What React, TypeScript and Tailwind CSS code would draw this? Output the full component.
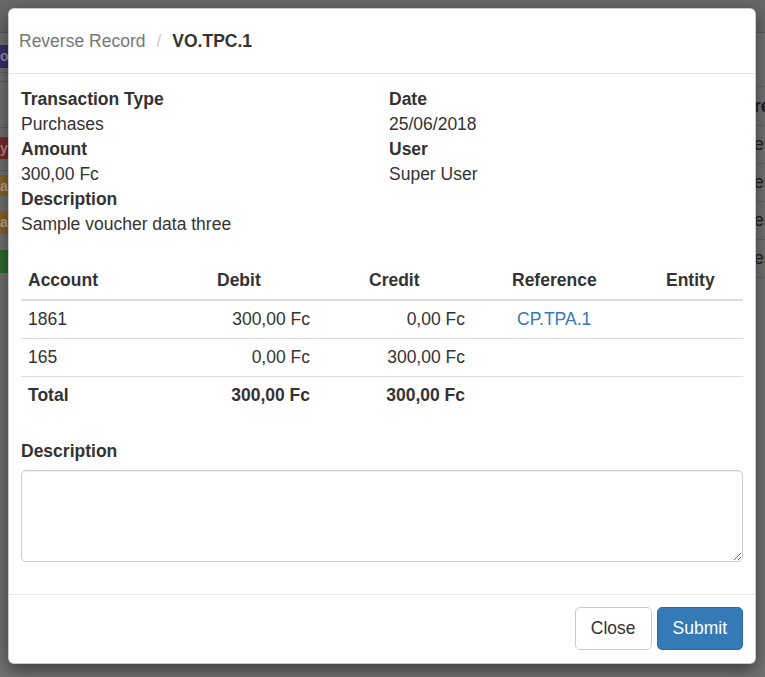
import React from "react";

const font = "font-['Liberation_Sans','Helvetica_Neue',Arial,sans-serif]";

function BgLeft() {
  return (
    <div className="w-[24px] flex flex-col text-[14px] leading-[22px] text-[rgba(255,255,255,0.45)] font-bold">
      <div className="h-[12px]" />
      <div className="h-[23px] bg-[#3b2f6a] overflow-hidden">o</div>
      <div className="h-[5px] border-b border-[#5f5f5f]" />
      <div className="h-[9px] border-b border-[#5f5f5f]" />
      <div className="h-[46px] border-b border-[#5f5f5f]" />
      <div className="h-[9px]" />
      <div className="h-[22px] bg-[#7a2a2a] overflow-hidden">y</div>
      <div className="h-[12px] border-b border-[#5f5f5f]" />
      <div className="h-[4px]" />
      <div className="h-[21px] bg-[#8a6428] overflow-hidden">a</div>
      <div className="h-[15px]" />
      <div className="h-[23px] bg-[#8a6428] overflow-hidden">a</div>
      <div className="h-[16px]" />
      <div className="h-[23px] bg-[#2f6a31] overflow-hidden pl-[9px]">l</div>
    </div>
  );
}

function BgRight() {
  const rows = ["es", "es", "es", "es"];
  return (
    <div className="w-[40px] flex flex-col text-[17.5px] text-[#1f1f1f] overflow-hidden">
      <div className="h-[54px] border-b border-[#626262]" />
      <div className="h-[39px] border-b border-[#626262] flex items-center pl-[29px] font-bold">re</div>
      {rows.map((r, i) => (
        <div key={i} className="h-[38px] border-b border-[#626262] flex items-center pl-[29px]">
          {r}
        </div>
      ))}
    </div>
  );
}

export default function App() {
  return (
    <div className={`relative w-[765px] h-[677px] overflow-hidden bg-[#737373] ${font}`}>
      {/* Background page (dimmed) */}
      <div className="h-[33px] bg-[#696969] border-b border-[#5c5c5c]" />
      <div className="flex justify-between">
        <BgLeft />
        <BgRight />
      </div>

      {/* Modal */}
      <div className="absolute left-[8px] top-[8px] w-[748px] bg-white rounded-[6px] border border-[rgba(0,0,0,0.2)] shadow-[0_6px_19px_rgba(0,0,0,0.5)] text-[17.5px] leading-[25px] text-[#333]">
        {/* Header */}
        <div className="pl-[10px] pr-[13px] pt-[20px] pb-[19px] border-b border-[#e5e5e5]">
          <div className="leading-[25px]">
            <span className="text-[#777]">Reverse Record</span>
            <span className="text-[#ccc] px-[11px]">/</span>
            <span className="font-bold">VO.TPC.1</span>
          </div>
        </div>

        {/* Body */}
        <div className="px-[12px] pt-[13px] pb-[13px]">
          <div className="grid grid-cols-[368px_1fr]">
            <div>
              <div className="font-bold">Transaction Type</div>
              <div>Purchases</div>
              <div className="font-bold">Amount</div>
              <div>300,00 Fc</div>
              <div className="font-bold">Description</div>
              <div>Sample voucher data three</div>
            </div>
            <div>
              <div className="font-bold">Date</div>
              <div>25/06/2018</div>
              <div className="font-bold">User</div>
              <div>Super User</div>
            </div>
          </div>

          {/* Table */}
          <div className="mt-[25px]">
            <div className="grid grid-cols-[190px_152px_143px_154px_84px] border-b-[2px] border-[#ddd] font-bold">
              <div className="pl-[7px] pt-[6px] pb-[6px]">Account</div>
              <div className="pl-[6px] pt-[6px] pb-[6px]">Debit</div>
              <div className="pl-[6px] pt-[6px] pb-[6px]">Credit</div>
              <div className="pl-[6px] pt-[6px] pb-[6px]">Reference</div>
              <div className="pl-[6px] pt-[6px] pb-[6px]">Entity</div>
            </div>
            <div className="grid grid-cols-[190px_152px_143px_154px_84px] border-b border-[#ddd]">
              <div className="pl-[7px] py-[6px]">1861</div>
              <div className="pr-[53px] py-[6px] text-right">300,00 Fc</div>
              <div className="pr-[41px] py-[6px] text-right">0,00 Fc</div>
              <div className="pl-[11px] py-[6px] text-[#337ab7]">CP.TPA.1</div>
              <div className="py-[6px]" />
            </div>
            <div className="grid grid-cols-[190px_152px_143px_154px_84px] border-b border-[#ddd]">
              <div className="pl-[7px] py-[6px]">165</div>
              <div className="pr-[53px] py-[6px] text-right">0,00 Fc</div>
              <div className="pr-[41px] py-[6px] text-right">300,00 Fc</div>
              <div className="py-[6px]" />
              <div className="py-[6px]" />
            </div>
            <div className="grid grid-cols-[190px_152px_143px_154px_84px] font-bold">
              <div className="pl-[7px] py-[6px]">Total</div>
              <div className="pr-[53px] py-[6px] text-right">300,00 Fc</div>
              <div className="pr-[41px] py-[6px] text-right">300,00 Fc</div>
              <div className="py-[6px]" />
              <div className="py-[6px]" />
            </div>
          </div>

          {/* Description field */}
          <div className="mt-[25px] mb-[19px]">
            <div className="font-bold mb-[6px]">Description</div>
            <textarea
              className="block w-full h-[92px] border border-[#ccc] rounded-[5px] shadow-[inset_0_1px_1px_rgba(0,0,0,0.075)] px-[15px] py-[7px] text-[17.5px] outline-none resize-y"
            />
          </div>
        </div>

        {/* Footer */}
        <div className="flex justify-end gap-[5px] border-t border-[#e5e5e5] pt-[12px] pb-[13px] pr-[12px]">
          <button className="h-[43px] px-[15px] border border-[#ccc] rounded-[5px] bg-white text-[#333] text-[17.5px] leading-[25px]">
            Close
          </button>
          <button className="h-[43px] px-[15px] border border-[#2e6da4] rounded-[5px] bg-[#337ab7] text-white text-[17.5px] leading-[25px]">
            Submit
          </button>
        </div>
      </div>
    </div>
  );
}
